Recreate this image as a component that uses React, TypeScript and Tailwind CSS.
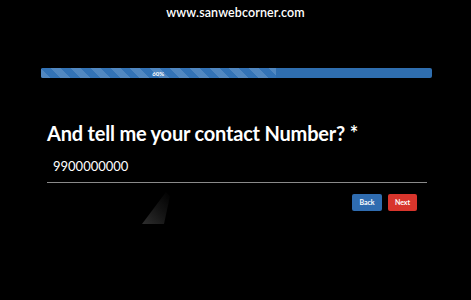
import { useState } from "react"

export default function App() {
  const [phone, setPhone] = useState("9900000000")
  const progress = 60

  return (
    <div className="w-[471px] h-[300px] bg-black text-white font-['Lato',sans-serif] flex flex-col overflow-hidden">
      <div className="h-[27px] flex items-center justify-center text-[12.5px] font-semibold tracking-[0.1px]">
        www.sanwebcorner.com
      </div>

      {/* progress */}
      <div className="mt-[41px] ml-[41px] mr-[39px] h-[10px] rounded-[2px] bg-[#2f6eaf] flex overflow-hidden">
        <div
          className="h-full flex items-center justify-center text-[6px] font-bold text-white bg-[#3373b6] bg-[repeating-linear-gradient(45deg,rgba(255,255,255,0.15)_0px,rgba(255,255,255,0.15)_7px,transparent_7px,transparent_14px)]"
          style={{ width: `${progress}%` }}
        >
          {progress}%
        </div>
      </div>

      {/* question */}
      <div className="ml-[44px] mr-[44px] mt-[43px] flex flex-col">
        <h1 className="px-[3px] text-[20px] leading-[24px] font-bold tracking-[-0.2px]">
          And tell me your contact Number? *
        </h1>
        <input
          value={phone}
          onChange={(e) => setPhone(e.target.value)}
          className="mt-[12px] ml-[3px] pl-[6px] pb-[7px] h-[26px] bg-transparent text-[13px] text-white outline-none border-b border-[#8a8a8a]"
        />
        <div className="mt-[11px] mr-[10px] flex items-start justify-between">
          <svg width="40" height="36" viewBox="0 0 40 36" className="ml-[96px] -mt-[4px]">
            <defs>
              <linearGradient id="streak" x1="0" y1="1" x2="1" y2="0">
                <stop offset="0" stopColor="#2e2e2e" />
                <stop offset="0.5" stopColor="#151515" />
                <stop offset="1" stopColor="#000" />
              </linearGradient>
            </defs>
            <path d="M2 34 L26 2 L30 6 L24 34 Z" fill="url(#streak)" />
          </svg>
          <div className="flex gap-[6px]">
            <button className="w-[30px] h-[17px] rounded-[2px] bg-[#2f6cb0] text-[7px] font-bold text-white">
              Back
            </button>
            <button className="w-[29px] h-[17px] rounded-[2px] bg-[#d8352c] text-[7px] font-bold text-white">
              Next
            </button>
          </div>
        </div>
      </div>
    </div>
  )
}
